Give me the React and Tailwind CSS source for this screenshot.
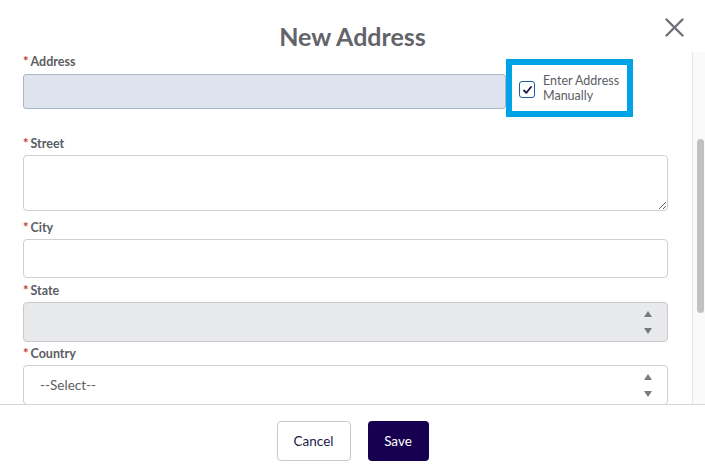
import React from "react";

function Label({ children }) {
  return (
    <div className="flex h-[18px] items-center text-[12.5px] font-bold text-[#5a5d63]">
      <span className="mr-[2px] text-[13px] text-[#c23934]">*</span>
      {children}
    </div>
  );
}

function Arrows() {
  return (
    <div className="flex flex-col items-center gap-[11px]">
      <svg width="8" height="6" viewBox="0 0 8 6"><path d="M4 0 L8 6 L0 6 Z" fill="#7a7b80" /></svg>
      <svg width="8" height="6" viewBox="0 0 8 6"><path d="M0 0 L8 0 L4 6 Z" fill="#7a7b80" /></svg>
    </div>
  );
}

export default function App() {
  return (
    <div className="flex h-[476px] w-[705px] flex-col overflow-hidden bg-white" style={{ fontFamily: "Lato, 'Open Sans', sans-serif" }}>
      <div className="grid h-[52px] shrink-0 grid-cols-[1fr_auto_1fr]">
        <div />
        <div className="pt-[21px] text-[25px] font-bold leading-[30px] text-[#626469]">New Address</div>
        <div className="flex justify-end pr-[21px] pt-[18px]">
          <svg width="19" height="19" viewBox="0 0 19 19">
            <path d="M1.5 1.5 L17.5 17.5 M17.5 1.5 L1.5 17.5" stroke="#6f7177" strokeWidth="2.4" strokeLinecap="round" />
          </svg>
        </div>
      </div>

      <div className="flex h-[352px] shrink-0">
        <div className="flex-1 overflow-hidden pl-[23px] pr-[24px]">
          <div className="flex items-start">
            <div className="w-[483px]">
              <div className="flex h-[20px] items-center text-[12.5px] font-bold text-[#5a5d63]">
                <span className="mr-[2px] text-[13px] text-[#c23934]">*</span>Address
              </div>
              <div className="mt-[2px] h-[35px] rounded-[3px] border border-[#a9b5c8] bg-[#dfe3ee]" />
            </div>
            <div className="mt-[7px] flex h-[58px] w-[127px] items-center border-[6px] border-[#00a4e6] bg-white pl-[7px]">
              <div className="mt-[3px] flex h-[17px] w-[16px] shrink-0 items-center justify-center rounded-[3px] border border-[#1b5bb0] bg-white">
                <svg width="9" height="8" viewBox="0 0 9 8">
                  <path d="M1 4.5 L3.4 6.8 L8 1" stroke="#1a1646" strokeWidth="1.8" fill="none" strokeLinecap="round" strokeLinejoin="round" />
                </svg>
              </div>
              <div className="ml-[8px] text-[12.5px] leading-[15px] text-[#5c5e63]">
                Enter Address
                <br />
                Manually
              </div>
            </div>
          </div>

          <div className="mt-[18px]">
            <Label>Street</Label>
            <textarea className="mt-[2px] block h-[56px] w-full resize-y rounded-[4px] border border-[#d0d0d0] bg-white outline-none" />
          </div>

          <div className="mt-[8px]">
            <Label>City</Label>
            <div className="mt-[2px] h-[39px] rounded-[4px] border border-[#d0d0d0] bg-white" />
          </div>

          <div className="mt-[4px]">
            <Label>State</Label>
            <div className="mt-[2px] flex h-[40px] items-center justify-end rounded-[4px] border border-[#c8c9cc] bg-[#e8e9eb] pr-[15px]">
              <Arrows />
            </div>
          </div>

          <div className="mt-[3px]">
            <Label>Country</Label>
            <div className="mt-[2px] flex h-[40px] items-center justify-between rounded-[4px] border border-[#d0d0d0] bg-white pl-[16px] pr-[15px]">
              <span className="text-[13.5px] text-[#5c5e63]">--Select--</span>
              <Arrows />
            </div>
          </div>
        </div>

        <div className="w-[13px] shrink-0 border-l border-[#e6e6e6] bg-[#fafafa] pl-[4px]">
          <div className="mt-[87px] h-[174px] w-[7px] rounded-full bg-[#c1c1c1]" />
        </div>
      </div>

      <div className="flex flex-1 justify-center gap-[17px] border-t border-[#d8d8d8] pt-[16px]">
        <button className="h-[40px] w-[74px] rounded-[4px] border border-[#c9c9c9] bg-white text-[13.5px] text-[#1b1b48]">Cancel</button>
        <button className="h-[40px] w-[61px] rounded-[4px] bg-[#180050] text-[13.5px] text-white">Save</button>
      </div>
    </div>
  );
}
